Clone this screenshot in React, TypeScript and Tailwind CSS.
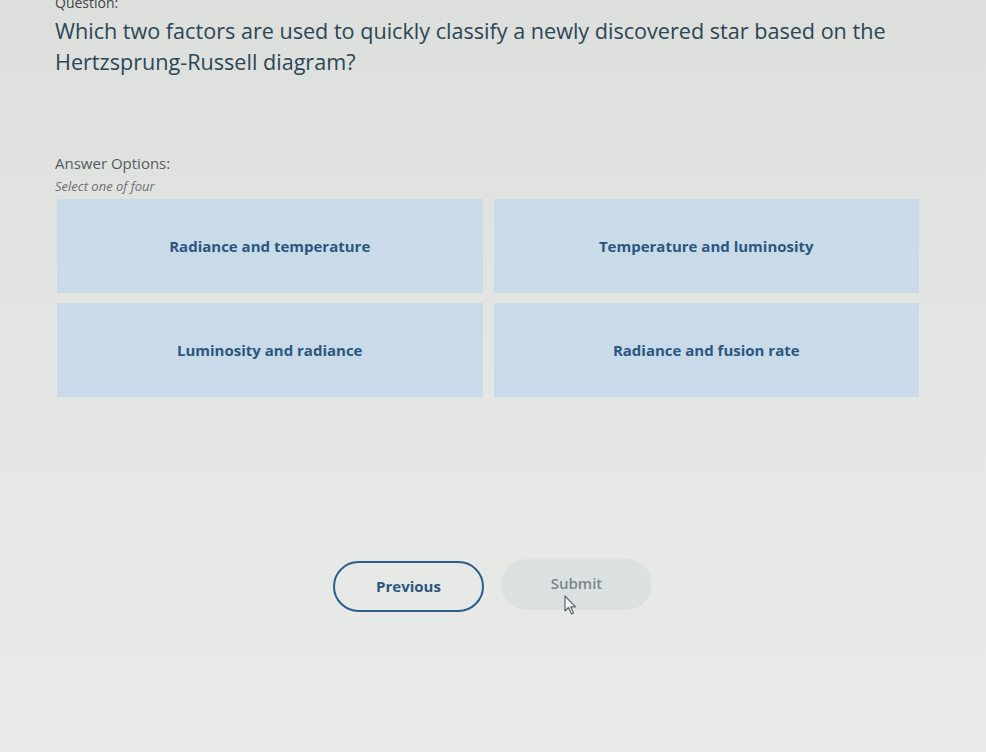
import React from "react";

const options = [
  "Radiance and temperature",
  "Temperature and luminosity",
  "Luminosity and radiance",
  "Radiance and fusion rate",
];

export default function App() {
  return (
    <div
      className="w-[986px] h-[752px] overflow-hidden bg-gradient-to-b from-[#dcdfdc] via-[#e4e6e4] to-[#e9ebe9] text-[#2d4455]"
      style={{ fontFamily: "'Open Sans', Lato, sans-serif" }}
    >
      <div className="pl-[55px] pr-[60px]">
        <div className="text-[14px] leading-[14px] -mt-[4px] text-[#444]">Question:</div>
        <div className="mt-[5px] text-[21.6px] leading-[31px] text-[#2c4656] font-medium">
          Which two factors are used to quickly classify a newly discovered star based on the Hertzsprung-Russell diagram?
        </div>
        <div className="mt-[76px] text-[15px] leading-[20px] text-[#555b5e]">Answer Options:</div>
        <div className="mt-[5px] text-[13px] leading-[16px] italic text-[#6a7074]">Select one of four</div>
        <div className="mt-[5px] ml-[2px] w-[862px] grid grid-cols-2 gap-x-[11px] gap-y-[10px]">
          {options.map((o) => (
            <div
              key={o}
              className="h-[94px] bg-[#c9dbe8] flex items-center justify-center text-[15px] font-bold text-[#2b5680]"
            >
              {o}
            </div>
          ))}
        </div>
        <div className="mt-[164px] flex justify-center gap-[17px] pl-[4px]">
          <div className="w-[151px] h-[51px] rounded-full border-2 border-[#2b5e8a] flex items-center justify-center text-[15px] font-bold text-[#2b5680]">
            Previous
          </div>
          <div className="relative w-[151px] h-[51px] -mt-[2px] rounded-full bg-[#dbe1e1] flex items-center justify-center text-[15px] font-semibold text-[#7a8689]">
            <span className="-mt-[2px]">Submit</span>
            <svg
              className="absolute left-[63px] top-[36px]"
              width="14"
              height="20"
              viewBox="0 0 14 20"
            >
              <path
                d="M1 1 L1 16 L4.5 12.5 L7.5 19 L9.5 18 L6.7 11.8 L11.5 11.8 Z"
                fill="#f3f5f5"
                stroke="#5d6669"
                strokeWidth="1.2"
                strokeLinejoin="round"
              />
            </svg>
          </div>
        </div>
      </div>
    </div>
  );
}
